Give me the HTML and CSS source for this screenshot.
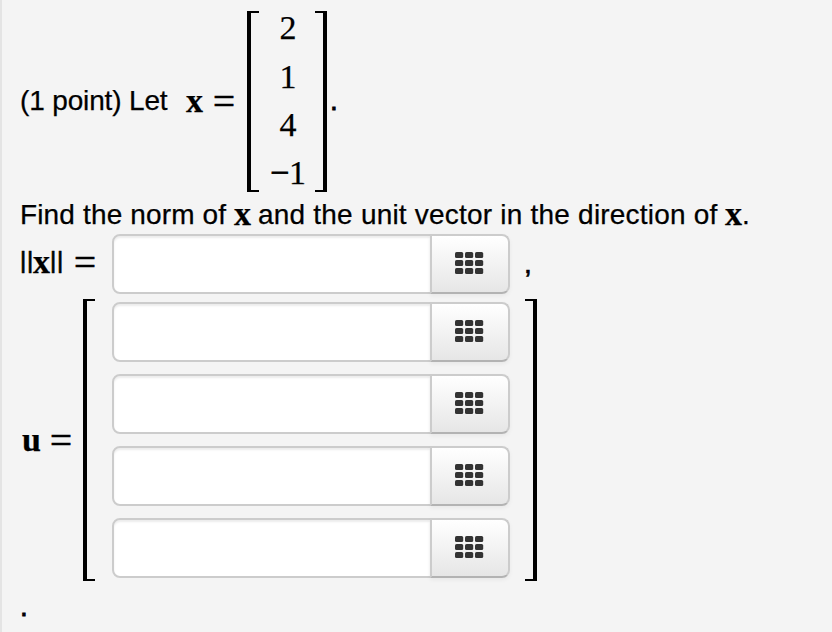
FILE: index.html
```html
<!DOCTYPE html>
<html lang="en">
<head>
<meta charset="utf-8">
<title>Norm and unit vector</title>
<link rel="stylesheet" href="styles.css">
</head>
<body>
<svg width="0" height="0" class="defs"><defs><g id="grid">
<rect x="0" y="0" width="8.2" height="6" rx="1.6"/><rect x="10" y="0" width="8.2" height="6" rx="1.6"/><rect x="20" y="0" width="8.2" height="6" rx="1.6"/>
<rect x="0" y="8" width="8.2" height="6" rx="1.6"/><rect x="10" y="8" width="8.2" height="6" rx="1.6"/><rect x="20" y="8" width="8.2" height="6" rx="1.6"/>
<rect x="0" y="16" width="8.2" height="6" rx="1.6"/><rect x="10" y="16" width="8.2" height="6" rx="1.6"/><rect x="20" y="16" width="8.2" height="6" rx="1.6"/>
</g></defs></svg>
<main class="problem">
  <section class="given">
    <span class="intro">(1 point) Let</span>
    <b class="vec given-x">x</b><span class="eq">=</span>
    <div class="matrix">
      <i class="bracket left"></i>
      <div class="entries"><span>2</span><span>1</span><span>4</span><span class="neg"><span class="minus">−</span>1</span></div>
      <i class="bracket right"></i>
    </div>
    <span class="stop">.</span>
  </section>
  <p class="question"><span class="q1">Find the norm of</span><b class="vec">x</b><span class="q2">and the unit vector in the direction of</span><b class="vec">x</b><span>.</span></p>
  <section class="norm">
    <div class="norm-label"><span class="bars">||</span><b class="vec">x</b><span class="bars">||</span><span class="eq">=</span></div>
    <div class="answer"><input type="text"><button><svg viewBox="0 0 29 22"><use href="#grid"/></svg></button></div>
    <span class="comma">,</span>
  </section>
  <section class="unit">
    <div class="unit-label"><b class="vec">u</b><span class="eq">=</span></div>
    <i class="bracket left"></i>
    <div class="answers">
      <div class="answer"><input type="text"><button><svg viewBox="0 0 29 22"><use href="#grid"/></svg></button></div>
      <div class="answer"><input type="text"><button><svg viewBox="0 0 29 22"><use href="#grid"/></svg></button></div>
      <div class="answer"><input type="text"><button><svg viewBox="0 0 29 22"><use href="#grid"/></svg></button></div>
      <div class="answer"><input type="text"><button><svg viewBox="0 0 29 22"><use href="#grid"/></svg></button></div>
    </div>
    <i class="bracket right"></i>
  </section>
  <p class="end">.</p>
</main>
</body>
</html>
```
FILE: styles.css
```css
* { box-sizing: border-box; }
body { margin: 0; background: #f4f4f4; color: #000; font: 28px/40px "Liberation Sans", Arial, sans-serif; overflow: hidden; -webkit-text-stroke: .25px #000; }
.defs { display: block; }
.problem { height: 632px; border-left: 2px solid #e4e4e4; padding: 11px 0 0 18px; white-space: nowrap; }
.vec, .eq, .entries { font-family: "Liberation Serif", "Times New Roman", serif; font-size: 34px; }
.eq { font-size: 39px; -webkit-text-stroke: .7px #000; }
.given { display: flex; align-items: center; height: 181px; }
.intro { width: 166px; margin-top: -2px; letter-spacing: -.15px; }
.given-x { width: 17px; margin-top: -2px; }
.given .eq { width: 36px; padding-left: 10px; }
.matrix { display: flex; width: 80px; height: 181px; margin-left: 8px; }
.bracket { flex: none; width: 12px; border: solid #000; }
.bracket.left { border-width: 2px 0 2px 4px; }
.bracket.right { border-width: 2px 4px 2px 0; }
.entries { width: 56px; padding-left: 2px; display: grid; grid-template-rows: 49px 48px 48px 48px; justify-items: center; line-height: 33px; }
.neg { display: flex; }
.minus { -webkit-text-stroke: .7px #000; }
.stop { margin: -2px 0 0 3px; -webkit-text-stroke: .8px #000; }
.question { display: flex; align-items: baseline; height: 42px; margin: 0; line-height: 42px; }
.q1 { width: 214px; letter-spacing: .15px; }
.q2 { width: 467px; margin-left: 7px; letter-spacing: .21px; }
.question .vec { position: relative; top: 1px; }
.norm { display: flex; height: 68px; }
.norm-label { display: flex; align-items: baseline; width: 92px; height: 54px; line-height: 51px; }
.norm-label .eq { margin-left: 11px; }
.norm-label .eq, .unit-label .eq { position: relative; top: 3px; }
.bars { width: 13px; font-size: 24px; letter-spacing: .8px; position: relative; top: -5px; -webkit-text-stroke: .7px #000; }
.answer { display: flex; width: 398px; height: 60px; }
.answer input { width: 320px; height: 60px; padding: 0; border: 2px solid #ccc; border-radius: 8px 0 0 8px; background: #fff; box-shadow: inset 0 2px 2px rgba(0,0,0,.075); }
.answer button { width: 80px; height: 60px; margin-left: -2px; padding: 0; border: 2px solid #ccc; border-bottom-color: #b3b3b3; border-radius: 0 8px 8px 0; background: linear-gradient(#fff, #e6e6e6); box-shadow: 0 2px 4px rgba(0,0,0,.05); }
.answer svg { display: block; width: 29px; height: 22px; margin: -2px 0 0 23px; fill: #333; }
.comma { margin-left: 14px; line-height: 59px; -webkit-text-stroke: .7px #000; }
.unit { display: flex; height: 282px; margin-top: -3px; }
.unit-label { display: flex; align-items: baseline; width: 63px; padding: 119px 0 0 2px; line-height: 40px; }
.unit-label .eq { margin-left: 9px; }
.unit .bracket { height: 282px; }
.answers { display: grid; gap: 12px; width: 398px; margin: 3px 15px 0 17px; align-content: start; }
.end { margin: 6px 0 0; -webkit-text-stroke: .8px #000; }
```
